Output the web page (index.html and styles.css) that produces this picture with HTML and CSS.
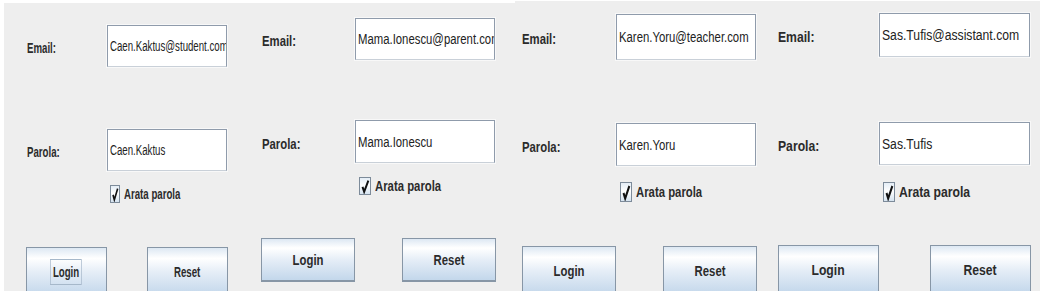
FILE: index.html
```html
<!DOCTYPE html>
<html lang="ro">
<head>
  <meta charset="UTF-8">
  <meta name="viewport" content="width=device-width, initial-scale=1.0">
  <title>Login</title>
  <link rel="stylesheet" href="styles.css">
</head>
<body>
  <div class="screen">
    <!-- Student -->
    <section class="panel p1">
      <div class="row">
        <span class="label"><span class="sx">Email:</span></span>
        <div class="field"><span class="sx">Caen.Kaktus@student.com</span></div>
      </div>
      <div class="row row-pass">
        <span class="label"><span class="sx">Parola:</span></span>
        <div class="field"><span class="sx">Caen.Kaktus</span></div>
      </div>
      <div class="show">
        <span class="box"><svg viewBox="0 0 12 18" preserveAspectRatio="none"><path d="M3 10 L5 15.5 L10 3" /></svg></span>
        <span class="sx">Arata parola</span>
      </div>
      <div class="buttons">
        <button class="btn"><span class="sx focus">Login</span></button>
        <button class="btn"><span class="sx">Reset</span></button>
      </div>
    </section>

    <!-- Parinte -->
    <section class="panel p2">
      <div class="row">
        <span class="label"><span class="sx">Email:</span></span>
        <div class="field"><span class="sx">Mama.Ionescu@parent.com</span></div>
      </div>
      <div class="row row-pass">
        <span class="label"><span class="sx">Parola:</span></span>
        <div class="field"><span class="sx">Mama.Ionescu</span></div>
      </div>
      <div class="show">
        <span class="box"><svg viewBox="0 0 12 18" preserveAspectRatio="none"><path d="M3 10 L5 15.5 L10 3" /></svg></span>
        <span class="sx">Arata parola</span>
      </div>
      <div class="buttons">
        <button class="btn"><span class="sx">Login</span></button>
        <button class="btn"><span class="sx">Reset</span></button>
      </div>
    </section>

    <!-- Profesor -->
    <section class="panel p3">
      <div class="row">
        <span class="label"><span class="sx">Email:</span></span>
        <div class="field"><span class="sx">Karen.Yoru@teacher.com</span></div>
      </div>
      <div class="row row-pass">
        <span class="label"><span class="sx">Parola:</span></span>
        <div class="field"><span class="sx">Karen.Yoru</span></div>
      </div>
      <div class="show">
        <span class="box"><svg viewBox="0 0 12 18" preserveAspectRatio="none"><path d="M3 10 L5 15.5 L10 3" /></svg></span>
        <span class="sx">Arata parola</span>
      </div>
      <div class="buttons">
        <button class="btn"><span class="sx">Login</span></button>
        <button class="btn"><span class="sx">Reset</span></button>
      </div>
    </section>

    <!-- Asistent -->
    <section class="panel p4">
      <div class="row">
        <span class="label"><span class="sx">Email:</span></span>
        <div class="field"><span class="sx">Sas.Tufis@assistant.com</span></div>
      </div>
      <div class="row row-pass">
        <span class="label"><span class="sx">Parola:</span></span>
        <div class="field"><span class="sx">Sas.Tufis</span></div>
      </div>
      <div class="show">
        <span class="box"><svg viewBox="0 0 12 18" preserveAspectRatio="none"><path d="M3 10 L5 15.5 L10 3" /></svg></span>
        <span class="sx">Arata parola</span>
      </div>
      <div class="buttons">
        <button class="btn"><span class="sx">Login</span></button>
        <button class="btn"><span class="sx">Reset</span></button>
      </div>
    </section>
  </div>
</body>
</html>
```

FILE: styles.css
```css
body {
  margin: 0;
  font-family: "Liberation Sans", Arial, sans-serif;
  font-size: 14px;
  color: #2b2b2b;
  background-color: #fff;
}
.screen {
  display: flex;
  height: 291px;
  overflow: hidden;
}
.panel {
  flex: none;
  width: var(--w);
  margin-top: var(--top);
  padding-top: var(--t1);
  background-color: #eeeeee;
  box-sizing: border-box;
}
/* valori pentru fiecare panou */
.p1 {
  --w: 253px; --top: 3px; --sx: 0.69;
  --lx: 23px; --lw: 80px; --fw: 120px; --fh: 42px; --fh2: 42px;
  --t1: 22px; --gap1: 62px; --gap2: 14px; --gap3: 44px;
  --cx: 106px; --cbw: 10px; --cbh: 18px;
  --bx: 22px; --bw: 81px; --bh: 50px; --bgap: 40px;
  margin-left: 4px;
}
.p2 {
  --w: 258px; --top: 3px; --sx: 0.81;
  --lx: 5px; --lw: 93px; --fw: 140px; --fh: 42px; --fh2: 43px;
  --t1: 15px; --gap1: 60px; --gap2: 14px; --gap3: 43px;
  --cx: 102px; --cbw: 12px; --cbh: 18px;
  --bx: 4px; --bw: 94px; --bh: 44px; --bgap: 47px;
}
.p3 {
  --w: 257px; --top: 1px; --sx: 0.81;
  --lx: 7px; --lw: 94px; --fw: 140px; --fh: 46px; --fh2: 43px;
  --t1: 13px; --gap1: 63px; --gap2: 16px; --gap3: 44px;
  --cx: 105px; --cbw: 12px; --cbh: 20px;
  --bx: 7px; --bw: 94px; --bh: 50px; --bgap: 47px;
}
.p4 {
  --w: 268px; --top: 1px; --sx: 0.87;
  --lx: 6px; --lw: 101px; --fw: 151px; --fh: 44px; --fh2: 43px;
  --t1: 12px; --gap1: 65px; --gap2: 17px; --gap3: 43px;
  --cx: 111px; --cbw: 12px; --cbh: 20px;
  --bx: 6px; --bw: 101px; --bh: 50px; --bgap: 51px;
}
.sx {
  display: inline-block;
  white-space: nowrap;
  transform: scaleX(var(--sx));
  transform-origin: left center;
}
.row {
  display: flex;
  align-items: center;
}
.row-pass {
  margin-top: var(--gap1);
}
.label {
  flex: none;
  width: var(--lw);
  margin-left: var(--lx);
  padding-top: 4px;
  font-weight: bold;
}
.field {
  flex: none;
  display: flex;
  align-items: center;
  width: var(--fw);
  height: var(--fh);
  padding-left: 2px;
  box-sizing: border-box;
  overflow: hidden;
  background-color: #fff;
  border: 1px solid #8f9bab;
  border-bottom-color: #c9d0d8;
  box-shadow: 0 0 0 1px #f8f8f8;
  color: #222;
}
.row-pass .field {
  height: var(--fh2);
}
.show {
  display: flex;
  align-items: center;
  gap: 4px;
  margin-top: var(--gap2);
  margin-left: var(--cx);
  font-weight: bold;
}
.box {
  flex: none;
  width: var(--cbw);
  height: var(--cbh);
  box-sizing: border-box;
  border: 1px solid #7d8b9a;
  background: linear-gradient(#e4edf6, #ffffff 45%, #d5e3f0);
}
.box svg {
  display: block;
  width: 100%;
  height: 100%;
}
.box path {
  fill: none;
  stroke: #111;
  stroke-width: 2.4;
}
.buttons {
  display: flex;
  gap: var(--bgap);
  margin-top: var(--gap3);
  padding-left: var(--bx);
}
.btn {
  flex: none;
  width: var(--bw);
  height: var(--bh);
  padding: 0;
  font-family: inherit;
  font-size: 14px;
  font-weight: bold;
  color: #2b2b2b;
  border: 1px solid #8796a6;
  border-bottom-width: 2px;
  background: linear-gradient(#dde8f3 0%, #ffffff 22%, #e6eef7 50%, #c3d7eb 100%);
}
.btn .sx {
  transform-origin: center center;
}
.btn .focus {
  padding: 4px 3px;
  border: 1px solid #a6b8ca;
}
```
